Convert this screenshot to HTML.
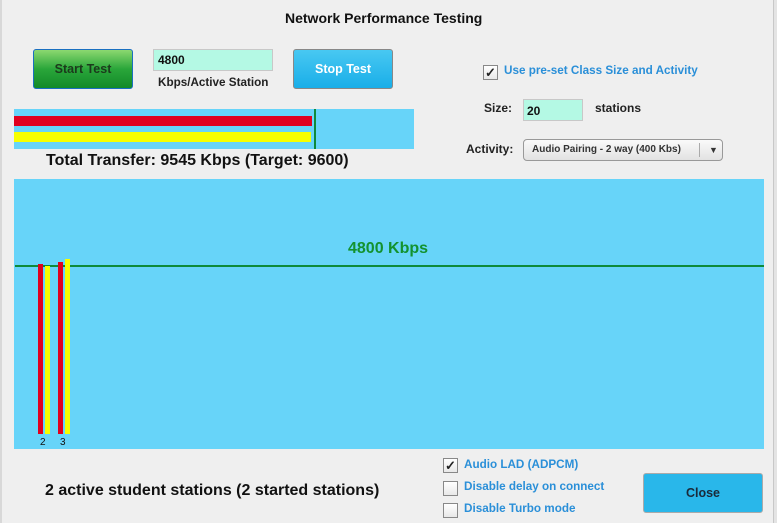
<!DOCTYPE html><html><head><style>
body{margin:0;width:777px;height:523px;background:#efefef;position:relative;overflow:hidden;font-family:"Liberation Sans",sans-serif;font-weight:bold}
.a{position:absolute}
.cb{position:absolute;width:13px;height:13px;border:1px solid #888;background:linear-gradient(#fff,#e8e8e8);font-size:13px;line-height:13px;text-align:center;color:#222}
.bl{color:#2a8fd8;font-size:11.7px}
</style></head><body>
<div class="a" style="left:0;top:0;width:2px;height:523px;background:#d8d8d8"></div>
<div class="a" style="left:773px;top:0;width:1px;height:523px;background:#c8c8c8"></div>
<div class="a" style="left:774px;top:0;width:3px;height:523px;background:#e4e4e4"></div>
<div class="a" style="left:285px;top:10px;font-size:14px;color:#111">Network Performance Testing</div>
<div class="a" style="left:33px;top:49px;width:98px;height:38px;border:1px solid #1a6fc0;border-radius:3px;background:linear-gradient(#8cd870,#2aa63a 50%,#128a28);color:#1c3a1c;font-size:12.5px;line-height:38px;text-align:center">Start Test</div>
<div class="a" style="left:153px;top:49px;width:118px;height:20px;border:1px solid #c8c8c8;background:#b4f9e4;font-size:12px;line-height:20px;text-indent:4px;color:#111">4800</div>
<div class="a" style="left:158px;top:76px;font-size:11.7px;color:#222">Kbps/Active Station</div>
<div class="a" style="left:293px;top:49px;width:98px;height:38px;border:1px solid #888;border-radius:3px;background:linear-gradient(#48c8f2,#19aee8);color:#fff;font-size:12.5px;line-height:38px;text-align:center">Stop Test</div>
<div class="a" style="left:14px;top:109px;width:400px;height:40px;background:#67d4f9"></div>
<div class="a" style="left:14px;top:116px;width:298px;height:10px;background:#e0001e"></div>
<div class="a" style="left:14px;top:132px;width:297px;height:10px;background:#f6ff00"></div>
<div class="a" style="left:314px;top:109px;width:2px;height:40px;background:#0e8a3a"></div>
<div class="a" style="left:46px;top:152px;font-size:16px;color:#111">Total Transfer: 9545 Kbps (Target: 9600)</div>
<div class="cb" style="left:483px;top:65px">✓</div>
<div class="a bl" style="left:504px;top:64px">Use pre-set Class Size and Activity</div>
<div class="a" style="left:484px;top:101px;font-size:12px;color:#222">Size:</div>
<div class="a" style="left:523px;top:99px;width:58px;height:20px;border:1px solid #c8c8c8;background:#b4f9e4;font-size:12px;line-height:22px;text-indent:3px;color:#111">20</div>
<div class="a" style="left:595px;top:101px;font-size:12px;color:#222">stations</div>
<div class="a" style="left:466px;top:142px;font-size:12px;color:#222">Activity:</div>
<div class="a" style="left:523px;top:139px;width:198px;height:20px;border:1px solid #999;border-radius:4px;background:linear-gradient(#fafafa,#e2e2e2);font-size:10px;line-height:20px;color:#333;text-indent:8px">Audio Pairing - 2 way (400 Kbs)<span style="position:absolute;left:175px;top:3px;width:1px;height:14px;background:#aaa"></span><span style="position:absolute;left:177px;top:0;font-size:9px">▼</span></div>
<div class="a" style="left:14px;top:179px;width:750px;height:270px;background:#67d4f9"></div>
<div class="a" style="left:348px;top:240px;font-size:16px;color:#13922f">4800 Kbps</div>
<div class="a" style="left:15px;top:265px;width:749px;height:2px;background:#0e8a3a"></div>
<div class="a" style="left:38px;top:264px;width:5px;height:170px;background:#e0001e"></div>
<div class="a" style="left:45px;top:266px;width:5px;height:168px;background:#f6ff00"></div>
<div class="a" style="left:58px;top:262px;width:5px;height:172px;background:#e0001e"></div>
<div class="a" style="left:65px;top:259px;width:5px;height:175px;background:#f6ff00"></div>
<div class="a" style="left:40px;top:437px;font-size:10px;font-weight:normal;color:#111">2</div>
<div class="a" style="left:60px;top:437px;font-size:10px;font-weight:normal;color:#111">3</div>
<div class="a" style="left:45px;top:482px;font-size:16px;color:#111">2 active student stations (2 started stations)</div>
<div class="cb" style="left:443px;top:458px">✓</div>
<div class="a bl" style="left:464px;top:458px">Audio LAD (ADPCM)</div>
<div class="cb" style="left:443px;top:481px"></div>
<div class="a bl" style="left:464px;top:480px">Disable delay on connect</div>
<div class="cb" style="left:443px;top:503px"></div>
<div class="a bl" style="left:464px;top:502px">Disable Turbo mode</div>
<div class="a" style="left:643px;top:473px;width:118px;height:38px;border:1px solid #aaa;border-radius:3px;background:#29b7ea;color:#1a2a3a;font-size:12.5px;line-height:38px;text-align:center">Close</div>
</body></html>
